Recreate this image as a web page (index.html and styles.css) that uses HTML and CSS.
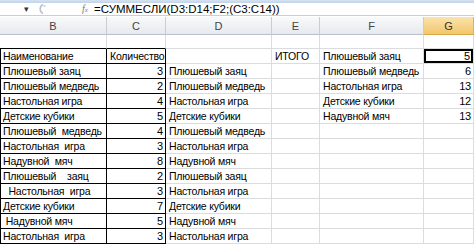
FILE: index.html
```html
<!DOCTYPE html>
<html lang="ru">
<head>
<meta charset="utf-8">
<title>СУММЕСЛИ</title>
<link rel="stylesheet" href="styles.css">
</head>
<body>
<div class="app">
  <div class="ribbon-edge"></div>
  <div class="fbar">
    <span class="drop">&#9662;</span>
    <svg class="grip" width="12" height="12" viewBox="0 0 12 12"><path d="M8 1.5 A5 5 0 0 0 8 10.5" fill="none" stroke="#b9c3cf" stroke-width="1.6"/><circle cx="9.5" cy="3" r="1.2" fill="#d5dbe3"/></svg>
    <span class="fx"><i>f</i><span class="x">x</span></span>
    <span class="formula">=СУММЕСЛИ(D3:D14;F2;(C3:C14))</span>
  </div>
  <div class="sheet">
    <div class="hd">B</div><div class="hd">C</div><div class="hd">D</div><div class="hd">E</div><div class="hd">F</div><div class="hd sel">G</div>

    <div class="c tb"></div><div class="c tb"></div><div class="c"></div><div class="c"></div><div class="c"></div><div class="c"></div>

    <div class="c t l">Наименование</div><div class="c t">Количество</div><div class="c"></div><div class="c">ИТОГО</div><div class="c">Плюшевый заяц</div><div class="c n active">5</div>
    <div class="c t l">Плюшевый заяц</div><div class="c t n">3</div><div class="c">Плюшевый заяц</div><div class="c"></div><div class="c">Плюшевый медведь</div><div class="c n">6</div>
    <div class="c t l">Плюшевый медведь</div><div class="c t n">2</div><div class="c">Плюшевый медведь</div><div class="c"></div><div class="c">Настольная игра</div><div class="c n">13</div>
    <div class="c t l">Настольная игра</div><div class="c t n">4</div><div class="c">Настольная игра</div><div class="c"></div><div class="c">Детские кубики</div><div class="c n">12</div>
    <div class="c t l">Детские кубики</div><div class="c t n">5</div><div class="c">Детские кубики</div><div class="c"></div><div class="c">Надувной мяч</div><div class="c n">13</div>
    <div class="c t l">Плюшевый  медведь</div><div class="c t n">4</div><div class="c">Плюшевый медведь</div><div class="c"></div><div class="c"></div><div class="c"></div>
    <div class="c t l">Настольная  игра</div><div class="c t n">3</div><div class="c">Настольная игра</div><div class="c"></div><div class="c"></div><div class="c"></div>
    <div class="c t l">Надувной  мяч</div><div class="c t n">8</div><div class="c">Надувной мяч</div><div class="c"></div><div class="c"></div><div class="c"></div>
    <div class="c t l">Плюшевый    заяц</div><div class="c t n">2</div><div class="c">Плюшевый заяц</div><div class="c"></div><div class="c"></div><div class="c"></div>
    <div class="c t l">  Настольная  игра</div><div class="c t n">3</div><div class="c">Настольная игра</div><div class="c"></div><div class="c"></div><div class="c"></div>
    <div class="c t l">Детские кубики</div><div class="c t n">7</div><div class="c">Детские кубики</div><div class="c"></div><div class="c"></div><div class="c"></div>
    <div class="c t l"> Надувной мяч</div><div class="c t n">5</div><div class="c">Надувной мяч</div><div class="c"></div><div class="c"></div><div class="c"></div>
    <div class="c t l">Настольная  игра</div><div class="c t n">3</div><div class="c">Настольная игра</div><div class="c"></div><div class="c"></div><div class="c"></div>
  </div>
</div>
</body>
</html>
```

FILE: styles.css
```css
* { box-sizing: border-box; }
html, body { margin: 0; padding: 0; background: #fff; }
body { width: 474px; height: 244px; overflow: hidden; font-family: "Liberation Sans", Arial, sans-serif; font-size: 10.5px; letter-spacing: -0.2px; color: #000; }

.app { display: flex; flex-direction: column; }

.ribbon-edge { height: 3px; background: linear-gradient(#d6e2f0, #c2d3e8); }

.fbar {
  height: 13px;
  display: flex;
  align-items: center;
  background: #fff;
  border-bottom: 1px solid #c6d0dc;
  margin-bottom: 1px;
}
.drop { margin-left: 24px; width: 8px; font-size: 9px; color: #333; line-height: 1; letter-spacing: 0; }
.grip { margin-left: 3px; }
.fx { margin-left: 35px; width: 10px; font-family: "Liberation Serif", serif; font-size: 10px; color: #7a7a7a; line-height: 1; letter-spacing: 0; }
.fx .x { font-size: 7px; font-style: italic; }
.formula { margin-left: 2px; font-size: 11.5px; letter-spacing: 0; white-space: nowrap; }

.sheet {
  display: grid;
  grid-template-columns: 107px 59px 106px 48px 104px 50px;
  grid-template-rows: 18px 14px repeat(13, 15px);
}

.hd {
  background: linear-gradient(#f9fafb, #e6e9ee);
  border-right: 1px solid #c9ced5;
  border-bottom: 1px solid #b9c0c9;
  color: #444;
  font-size: 11px;
  letter-spacing: 0;
  display: flex;
  align-items: center;
  justify-content: center;
}
.hd.sel { background: linear-gradient(#fbe3ad, #f3c66c); border-right-color: #e0b25b; border-bottom-color: #d9a646; color: #333; }

.c {
  border-right: 1px solid #dadcdf;
  border-bottom: 1px solid #dadcdf;
  padding: 0 2px 0 3px;
  white-space: pre;
  display: flex;
  align-items: center;
  line-height: 1;
}
.c.tb { border-bottom-color: #000; }
.c.t { border-right-color: #000; border-bottom-color: #000; }
.c.l { border-left: 1px solid #000; padding-left: 2px; }
.c.n { justify-content: flex-end; font-size: 11px; }
.c.active { box-shadow: inset 0 0 0 2px #000; padding-right: 3px; }
```
